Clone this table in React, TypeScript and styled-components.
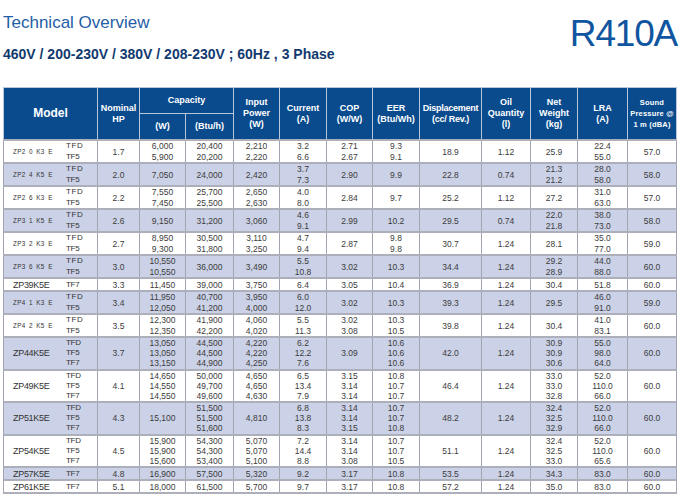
import React from "react";
import styled, { createGlobalStyle } from "styled-components";

const GlobalStyle = createGlobalStyle`
  html, body { margin: 0; padding: 0; background: #ffffff; }
  body { font-family: "Liberation Sans", Arial, sans-serif; overflow: hidden; }
`;

const Page = styled.div`
  width: 680px;
  height: 495px;
  box-sizing: border-box;
  padding: 13px 4px 0 3px;
  overflow: hidden;
  background: #ffffff;
`;

const TopBar = styled.header`
  display: flex;
  justify-content: space-between;
  align-items: flex-start;
`;

const Titles = styled.div`
  display: flex;
  flex-direction: column;
  gap: 13px;
`;

const Title = styled.h1`
  margin: 0;
  font-size: 17px;
  line-height: 20px;
  font-weight: 400;
  color: #1f5ea6;
`;

const Subtitle = styled.h2`
  margin: 0;
  font-size: 14px;
  line-height: 16px;
  font-weight: 700;
  color: #123a70;
`;

const Refrigerant = styled.div`
  margin-top: 1px;
  margin-right: -1px;
  font-size: 37px;
  line-height: 40px;
  letter-spacing: -1.2px;
  color: #0f55a0;
`;

const Table = styled.table`
  margin-top: 25px;
  width: 673px;
  table-layout: fixed;
  border-collapse: collapse;
  border: 1px solid #8f92a0;
`;

const Head = styled.th<{ $size?: number; $tight?: boolean; $spread?: boolean }>`
  background: #0a4b8e;
  color: #ffffff;
  font-size: ${(p) => p.$size ?? 9}px;
  line-height: 11px;
  font-weight: 700;
  letter-spacing: ${(p) => (p.$tight ? "-0.25px" : p.$spread ? "0.2px" : "0")};
  border: 1px solid #b9c7da;
  padding: 0;
  height: 25px;
  text-align: center;
  vertical-align: middle;
  white-space: nowrap;
`;

const DataRow = styled.tr<{ $shaded: boolean }>`
  background: ${(p) => (p.$shaded ? "#cbd1e6" : "#ffffff")};
`;

const Cell = styled.td`
  padding: 0;
  border-left: 1px solid #a2a4b0;
  border-right: 1px solid #a2a4b0;
  border-top: 2px solid #adafba;
  border-bottom: 2px solid #adafba;
  color: #3c3c3c;
  font-size: 8.5px;
  vertical-align: middle;
`;

const Stack = styled.div<{ $h: number }>`
  height: ${(p) => p.$h}px;
  display: flex;
  flex-direction: column;
`;

const Line = styled.div`
  flex: 1;
  display: flex;
  align-items: center;
  justify-content: center;
  line-height: 10px;
  white-space: nowrap;
`;

const ModelBox = styled.div<{ $h: number }>`
  height: ${(p) => p.$h}px;
  display: flex;
  padding-left: 9px;
`;

const ModelName = styled.div<{ $small: boolean }>`
  width: 53px;
  flex: none;
  display: flex;
  align-items: center;
  white-space: nowrap;
  color: #333333;
  font-size: ${(p) => (p.$small ? 6.3 : 9)}px;
  letter-spacing: ${(p) => (p.$small ? "0.3px" : "-0.3px")};
  word-spacing: ${(p) => (p.$small ? "1.5px" : "0")};
`;

const Variants = styled.div`
  flex: 1;
  display: flex;
  flex-direction: column;
`;

const Variant = styled.div<{ $spaced: boolean }>`
  flex: 1;
  display: flex;
  align-items: center;
  font-size: 8px;
  line-height: 10px;
  letter-spacing: ${(p) => (p.$spaced ? "0.6px" : "-0.3px")};
  color: #333333;
`;

type Val = string | string[];

interface Row {
  model: string;
  small?: boolean;
  variants: string[];
  cells: Val[];
}

const rows: Row[] = [
  { model: "ZP2 0 K3 E", small: true, variants: ["TFD", "TF5"], cells: ["1.7", ["6,000", "5,900"], ["20,400", "20,200"], ["2,210", "2,220"], ["3.2", "6.6"], ["2.71", "2.67"], ["9.3", "9.1"], "18.9", "1.12", "25.9", ["22.4", "55.0"], "57.0"] },
  { model: "ZP2 4 K5 E", small: true, variants: ["TFD", "TF5"], cells: ["2.0", "7,050", "24,000", "2,420", ["3.7", "7.3"], "2.90", "9.9", "22.8", "0.74", ["21.3", "21.2"], ["28.0", "58.0"], "58.0"] },
  { model: "ZP2 6 K3 E", small: true, variants: ["TFD", "TF5"], cells: ["2.2", ["7,550", "7,450"], ["25,700", "25,500"], ["2,650", "2,630"], ["4.0", "8.0"], "2.84", "9.7", "25.2", "1.12", "27.2", ["31.0", "63.0"], "57.0"] },
  { model: "ZP3 1 K5 E", small: true, variants: ["TFD", "TF5"], cells: ["2.6", "9,150", "31,200", "3,060", ["4.6", "9.1"], "2.99", "10.2", "29.5", "0.74", ["22.0", "21.8"], ["38.0", "73.0"], "58.0"] },
  { model: "ZP3 2 K3 E", small: true, variants: ["TFD", "TF5"], cells: ["2.7", ["8,950", "9,300"], ["30,500", "31,800"], ["3,110", "3,250"], ["4.7", "9.4"], "2.87", ["9.8", "9.8"], "30.7", "1.24", "28.1", ["35.0", "77.0"], "59.0"] },
  { model: "ZP3 6 K5 E", small: true, variants: ["TFD", "TF5"], cells: ["3.0", ["10,550", "10,550"], "36,000", "3,490", ["5.5", "10.8"], "3.02", "10.3", "34.4", "1.24", ["29.2", "28.9"], ["44.0", "88.0"], "60.0"] },
  { model: "ZP39K5E", variants: ["TF7"], cells: ["3.3", "11,450", "39,000", "3,750", "6.4", "3.05", "10.4", "36.9", "1.24", "30.4", "51.8", "60.0"] },
  { model: "ZP4 1 K3 E", small: true, variants: ["TFD", "TF5"], cells: ["3.4", ["11,950", "12,050"], ["40,700", "41,200"], ["3,950", "4,000"], ["6.0", "12.0"], "3.02", "10.3", "39.3", "1.24", "29.5", ["46.0", "91.0"], "59.0"] },
  { model: "ZP4 2 K5 E", small: true, variants: ["TFD", "TF5"], cells: ["3.5", ["12,300", "12,350"], ["41,900", "42,200"], ["4,060", "4,020"], ["5.5", "11.3"], ["3.02", "3.08"], ["10.3", "10.5"], "39.8", "1.24", "30.4", ["41.0", "83.1"], "60.0"] },
  { model: "ZP44K5E", variants: ["TFD", "TF5", "TF7"], cells: ["3.7", ["13,050", "13,050", "13,150"], ["44,500", "44,500", "44,900"], ["4,220", "4,220", "4,250"], ["6.2", "12.2", "7.6"], "3.09", ["10.6", "10.6", "10.6"], "42.0", "1.24", ["30.9", "30.9", "30.6"], ["55.0", "98.0", "64.0"], "60.0"] },
  { model: "ZP49K5E", variants: ["TFD", "TF5", "TF7"], cells: ["4.1", ["14,650", "14,550", "14,550"], ["50,000", "49,700", "49,600"], ["4,650", "4,650", "4,630"], ["6.5", "13.4", "7.9"], ["3.15", "3.14", "3.14"], ["10.8", "10.7", "10.7"], "46.4", "1.24", ["33.0", "33.0", "32.8"], ["52.0", "110.0", "66.0"], "60.0"] },
  { model: "ZP51K5E", variants: ["TFD", "TF5", "TF7"], cells: ["4.3", "15,100", ["51,500", "51,500", "51,600"], "4,810", ["6.8", "13.8", "8.3"], ["3.14", "3.14", "3.15"], ["10.7", "10.7", "10.8"], "48.2", "1.24", ["32.4", "32.5", "32.9"], ["52.0", "110.0", "66.0"], "60.0"] },
  { model: "ZP54K5E", variants: ["TFD", "TF5", "TF7"], cells: ["4.5", ["15,900", "15,900", "15,600"], ["54,300", "54,300", "53,400"], ["5,070", "5,070", "5,100"], ["7.2", "14.4", "8.8"], ["3.14", "3.14", "3.08"], ["10.7", "10.7", "10.5"], "51.1", "1.24", ["32.4", "32.5", "33.0"], ["52.0", "110.0", "65.6"], "60.0"] },
  { model: "ZP57K5E", variants: ["TF7"], cells: ["4.8", "16,900", "57,500", "5,320", "9.2", "3.17", "10.8", "53.5", "1.24", "34.3", "83.0", "60.0"] },
  { model: "ZP61K5E", variants: ["TF7"], cells: ["5.1", "18,000", "61,500", "5,700", "9.7", "3.17", "10.8", "57.2", "1.24", "35.0", "83.0", "60.0"] },
];

const colWidths = [94, 42, 46, 48, 46, 47, 46, 47, 62, 49, 47, 50, 49];

const heightFor = (lines: number) => (lines === 3 ? 30.5 : lines * 10 + 1);

const ValueCell = ({ value, h }: { value: Val; h: number }) => {
  const lines = Array.isArray(value) ? value : [value];
  return (
    <Cell>
      <Stack $h={h}>
        {lines.map((v, i) => (
          <Line key={i}>{v}</Line>
        ))}
      </Stack>
    </Cell>
  );
};

export default function App() {
  return (
    <>
      <GlobalStyle />
      <Page>
        <TopBar>
          <Titles>
            <Title>Technical Overview</Title>
            <Subtitle>460V / 200-230V / 380V / 208-230V ; 60Hz , 3 Phase</Subtitle>
          </Titles>
          <Refrigerant>R410A</Refrigerant>
        </TopBar>
        <Table>
          <colgroup>
            {colWidths.map((w, i) => (
              <col key={i} style={{ width: w }} />
            ))}
          </colgroup>
          <thead>
            <tr>
              <Head rowSpan={2} $size={12}>Model</Head>
              <Head rowSpan={2}>Nominal<br />HP</Head>
              <Head colSpan={2}>Capacity</Head>
              <Head rowSpan={2}>Input<br />Power<br />(W)</Head>
              <Head rowSpan={2}>Current<br />(A)</Head>
              <Head rowSpan={2}>COP<br />(W/W)</Head>
              <Head rowSpan={2}>EER<br />(Btu/Wh)</Head>
              <Head rowSpan={2} $tight>Displacement<br />(cc/ Rev.)</Head>
              <Head rowSpan={2}>Oil<br />Quantity<br />(l)</Head>
              <Head rowSpan={2}>Net<br />Weight<br />(kg)</Head>
              <Head rowSpan={2}>LRA<br />(A)</Head>
              <Head rowSpan={2} $size={7.5} $spread>Sound<br />Pressure @<br />1 m (dBA)</Head>
            </tr>
            <tr>
              <Head>(W)</Head>
              <Head>(Btu/h)</Head>
            </tr>
          </thead>
          <tbody>
            {rows.map((r, ri) => {
              const h = heightFor(r.variants.length);
              const two = r.variants.length === 2;
              return (
                <DataRow key={ri} $shaded={ri % 2 === 1}>
                  <Cell>
                    <ModelBox $h={h}>
                      <ModelName $small={!!r.small}>{r.model}</ModelName>
                      <Variants>
                        {r.variants.map((v, vi) => (
                          <Variant key={vi} $spaced={two && v === "TFD"}>{v}</Variant>
                        ))}
                      </Variants>
                    </ModelBox>
                  </Cell>
                  {r.cells.map((c, ci) => (
                    <ValueCell key={ci} value={c} h={h} />
                  ))}
                </DataRow>
              );
            })}
          </tbody>
        </Table>
      </Page>
    </>
  );
}
